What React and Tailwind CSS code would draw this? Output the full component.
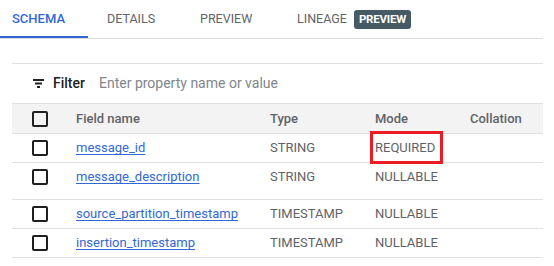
export default function App() {
  const rows = [
    { name: "message_id", type: "STRING", mode: "REQUIRED", tall: false, boxed: true },
    { name: "message_description", type: "STRING", mode: "NULLABLE", tall: true },
    { name: "source_partition_timestamp", type: "TIMESTAMP", mode: "NULLABLE" },
    { name: "insertion_timestamp", type: "TIMESTAMP", mode: "NULLABLE" },
  ];
  const cols = "grid grid-cols-[64px_194px_105px_95px_73px]";
  const Box = () => (
    <div className="w-4 h-4 border-2 border-[#1f1f1f] rounded-[2px]" />
  );
  return (
    <div className="w-[554px] h-[266px] bg-white font-['Roboto',sans-serif] overflow-hidden">
      <div className="flex w-[543px] h-[39px] border-b border-[#dadce0] text-[12.5px] font-medium">
        <div className="w-[88px] h-[38px] pl-3 pt-[2px] flex items-center border-b-2 border-[#3367d6] text-[#3367d6] text-[13px]">
          SCHEMA
        </div>
        <div className="w-[93px] h-[38px] pl-[19px] pt-[1px] flex items-center text-[#5f6368] font-normal">
          DETAILS
        </div>
        <div className="w-[97px] h-[38px] pl-[19px] pt-[1px] flex items-center text-[#5f6368] font-normal">
          PREVIEW
        </div>
        <div className="h-[38px] pl-[19px] pt-[1px] flex items-center text-[#5f6368] font-normal">
          LINEAGE
          <span className="ml-[7px] h-[19px] px-[5px] flex items-center rounded-[3px] bg-[#455a64] text-white font-bold text-[11.5px] tracking-[-0.2px]">
            PREVIEW
          </span>
        </div>
      </div>

      <div className="ml-3 w-[531px] mt-[24px]">
        <div className="h-[41px] border-t border-b border-[#e0e0e0] flex items-center text-[14px]">
          <svg width="11" height="9" viewBox="0 0 11 9" className="ml-[21px]">
            <rect x="0" y="0" width="11" height="2" fill="#202124" />
            <rect x="2" y="3.5" width="7" height="2" fill="#202124" />
            <rect x="4" y="7" width="3" height="2" fill="#202124" />
          </svg>
          <span className="ml-[9px] font-medium text-[#202124]">Filter</span>
          <span className="ml-[14px] text-[#80868b]">Enter property name or value</span>
        </div>

        <div className={`${cols} h-[30px] bg-[#f3f3f3] border-b border-[#e0e0e0] items-center text-[13px] font-medium text-[#5f6368]`}>
          <div className="pl-5"><Box /></div>
          <div>Field name</div>
          <div>Type</div>
          <div>Mode</div>
          <div>Collation</div>
        </div>

        {rows.map((r) => (
          <div
            key={r.name}
            className={`${cols} border-b border-[#e0e0e0] text-[13px] text-[#5f6368] ${r.tall ? "h-[37px]" : "h-[29px]"}`}
          >
            <div className="pl-5 h-[28px] flex items-center"><Box /></div>
            <div className="h-[28px] flex items-center">
              <span className="text-[#3367d6] underline decoration-[#3367d6] underline-offset-2">{r.name}</span>
            </div>
            <div className="h-[28px] flex items-center">{r.type}</div>
            <div className="h-[28px] flex items-center relative">
              {r.mode}
              {r.boxed && (
                <div className="absolute left-[-5px] top-[-3px] w-[73px] h-[33px] border-[3px] border-[#ec1c24]" />
              )}
            </div>
            <div />
          </div>
        ))}
      </div>
    </div>
  );
}
